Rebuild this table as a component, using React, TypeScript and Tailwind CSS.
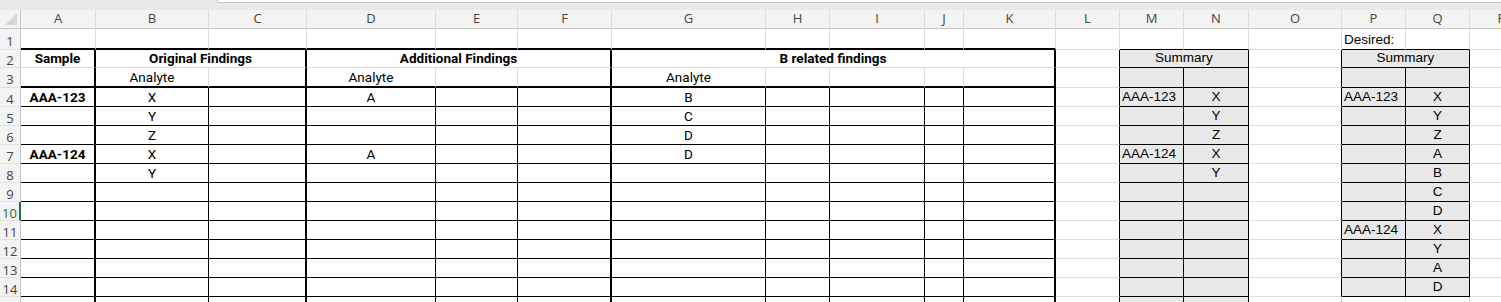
const COLS = ["A", "B", "C", "D", "E", "F", "G", "H", "I", "J", "K", "L", "M", "N", "O", "P", "Q", "R"];
const ROWS = [1, 2, 3, 4, 5, 6, 7, 8, 9, 10, 11, 12, 13, 14, 15];

const GRID =
  "grid grid-cols-[21px_75px_113px_98px_129px_82px_94px_154px_64px_95px_39px_92px_64px_64px_65px_93px_64px_64px_64px]";

type Entry = { text: string; bold?: boolean; left?: boolean };

// sheet contents, keyed by "row:col" (col 0 = A)
const CELLS: Record<string, Entry> = {
  "1:15": { text: "Desired:", left: true },
  "2:0": { text: "Sample", bold: true },
  "2:1": { text: "Original Findings", bold: true },
  "2:3": { text: "Additional Findings", bold: true },
  "2:6": { text: "B related findings", bold: true },
  "2:12": { text: "Summary" },
  "2:15": { text: "Summary" },
  "3:1": { text: "Analyte" },
  "3:3": { text: "Analyte" },
  "3:6": { text: "Analyte" },
  "4:0": { text: "AAA-123", bold: true },
  "4:1": { text: "X" },
  "4:3": { text: "A" },
  "4:6": { text: "B" },
  "5:1": { text: "Y" },
  "5:6": { text: "C" },
  "6:1": { text: "Z" },
  "6:6": { text: "D" },
  "7:0": { text: "AAA-124", bold: true },
  "7:1": { text: "X" },
  "7:3": { text: "A" },
  "7:6": { text: "D" },
  "8:1": { text: "Y" },
  // summary as built
  "4:12": { text: "AAA-123", left: true },
  "4:13": { text: "X" },
  "5:13": { text: "Y" },
  "6:13": { text: "Z" },
  "7:12": { text: "AAA-124", left: true },
  "7:13": { text: "X" },
  "8:13": { text: "Y" },
  // summary as wanted
  "4:15": { text: "AAA-123", left: true },
  "4:16": { text: "X" },
  "5:16": { text: "Y" },
  "6:16": { text: "Z" },
  "7:16": { text: "A" },
  "8:16": { text: "B" },
  "9:16": { text: "C" },
  "10:16": { text: "D" },
  "11:15": { text: "AAA-124", left: true },
  "11:16": { text: "X" },
  "12:16": { text: "Y" },
  "13:16": { text: "A" },
  "14:16": { text: "D" },
};

// merged header cells in row 2: start column -> span
const MERGES: Record<number, string> = {
  1: "col-span-2",
  3: "col-span-3",
  6: "col-span-5",
  12: "col-span-2",
  15: "col-span-2",
};
const MERGE_SIZE: Record<number, number> = { 1: 2, 3: 3, 6: 5, 12: 2, 15: 2 };

function inMN(r: number, c: number) {
  return r >= 2 && (c === 12 || c === 13);
}
function inPQ(r: number, c: number) {
  return r >= 2 && r <= 14 && (c === 15 || c === 16);
}

function rightEdge(r: number, c: number) {
  if (r >= 2 && (c === 0 || c === 2 || c === 5 || c === 10)) return "border-r-2 border-r-black";
  if (r >= 4 && c <= 9) return "border-r border-r-black";
  if (r >= 2 && (c === 11 || c === 12 || c === 13)) return "border-r border-r-black";
  if (r >= 2 && r <= 14 && (c === 14 || c === 15 || c === 16)) return "border-r border-r-black";
  return "border-r border-r-[#dcdcdc]";
}

function bottomEdge(r: number, c: number) {
  if (c <= 10) {
    if (r === 1 || r === 3) return "border-b-2 border-b-black";
    if (r >= 4) return "border-b border-b-black";
    return "border-b border-b-[#dcdcdc]";
  }
  if (r >= 1 && (c === 12 || c === 13)) return "border-b border-b-black";
  if (r >= 1 && r <= 14 && (c === 15 || c === 16)) return "border-b border-b-black";
  return "border-b border-b-[#dcdcdc]";
}

function rowHeight(r: number) {
  if (r === 1) return "h-[21px]";
  if (r === 2) return "h-[18px]";
  if (r === 3) return "h-[20px]";
  return "h-[19px]";
}

function Cell({ r, c }: { r: number; c: number }) {
  const entry = CELLS[`${r}:${c}`];
  const span = r === 2 ? MERGES[c] ?? "" : "";
  const lastCol = r === 2 && MERGE_SIZE[c] ? c + MERGE_SIZE[c] - 1 : c;
  const fill = inMN(r, c) || inPQ(r, c) ? "bg-[#e8e8e8]" : "bg-white";
  const font =
    c <= 10
      ? "font-['Roboto','Liberation_Sans',sans-serif] text-[13.5px]"
      : "font-['Liberation_Sans',Arial,sans-serif] text-[13.5px]";

  return (
    <div
      className={`box-border flex items-end overflow-hidden whitespace-nowrap pb-[1px] leading-[16px] text-black ${span} ${fill} ${font} ${rowHeight(r)} ${rightEdge(r, lastCol)} ${bottomEdge(r, c)} ${
        entry?.left ? "justify-start pl-[2px]" : "justify-center"
      } ${entry?.bold ? "font-bold" : ""}`}
    >
      {entry?.text}
    </div>
  );
}

function RowHeader({ r }: { r: number }) {
  const active = r === 10;
  return (
    <div
      className={`box-border flex items-center justify-center border-b border-b-[#e1e1e1] bg-[#f3f3f3] pt-[3px] font-['Open_Sans','Noto_Sans',sans-serif] text-[13px] leading-[14px] ${rowHeight(r)} ${
        active ? "border-r-2 border-r-[#217346] text-[#217346]" : "border-r border-r-[#c6c6c6] text-[#444]"
      }`}
    >
      {r}
    </div>
  );
}

export default function App() {
  return (
    <div className="h-[302px] w-[1501px] overflow-hidden bg-white">
      {/* strip under the formula bar */}
      <div className="flex h-[10px] bg-[#e9e9e9]">
        <div className="w-[217px]" />
        <div className="h-[3px] flex-1 border-b border-l border-[#c8c8c8] bg-white" />
      </div>

      <div className={GRID}>
        {/* select-all corner */}
        <div className="box-border flex h-[19px] items-end justify-end border-b border-r border-[#c6c6c6] bg-[#f3f3f3] p-[3px]">
          <svg width="12" height="12" viewBox="0 0 12 12">
            <path d="M12 0 L12 12 L0 12 Z" fill="#d6d6d6" />
          </svg>
        </div>
        {COLS.map((col) => (
          <div
            key={col}
            className="box-border flex h-[19px] items-center justify-center border-b border-r border-b-[#c6c6c6] border-r-[#dcdcdc] bg-[#f3f3f3] font-['Open_Sans','Noto_Sans',sans-serif] text-[13px] text-[#444]"
          >
            {col}
          </div>
        ))}

        {ROWS.map((r) => [
          <RowHeader key={`h${r}`} r={r} />,
          ...COLS.map((_, c) => {
            if (r === 2) {
              // skip columns swallowed by a merged header
              const covered = Object.keys(MERGE_SIZE).some((k) => {
                const s = Number(k);
                return c > s && c < s + MERGE_SIZE[s];
              });
              if (covered) return null;
            }
            return <Cell key={`${r}-${c}`} r={r} c={c} />;
          }),
        ])}
      </div>
    </div>
  );
}
